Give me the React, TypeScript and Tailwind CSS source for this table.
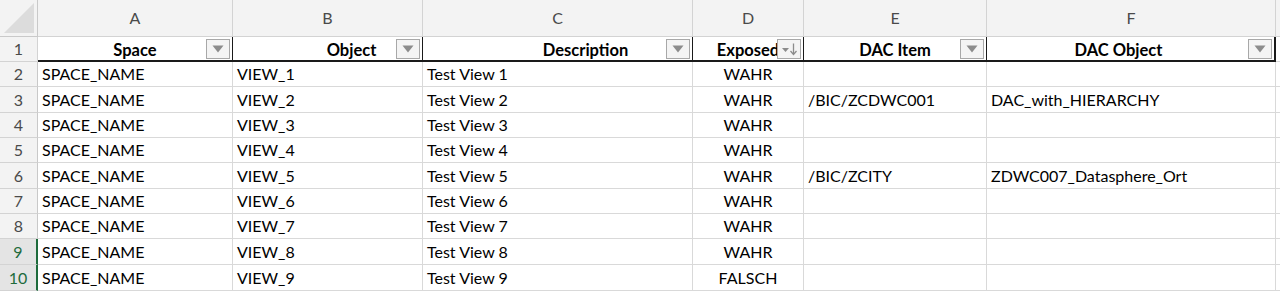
import React from "react";

const cols = ["A", "B", "C", "D", "E", "F"];

const headers: { label: string; cls: string; sort?: boolean }[] = [
  { label: "Space", cls: "justify-center" },
  { label: "Object", cls: "justify-center pl-[48px]" },
  { label: "Description", cls: "justify-center pl-[56px]" },
  { label: "Exposed", cls: "justify-center", sort: true },
  { label: "DAC Item", cls: "justify-center" },
  { label: "DAC Object", cls: "justify-center pr-[24px]" },
];

const rows: string[][] = [
  ["SPACE_NAME", "VIEW_1", "Test View 1", "WAHR", "", ""],
  ["SPACE_NAME", "VIEW_2", "Test View 2", "WAHR", "/BIC/ZCDWC001", "DAC_with_HIERARCHY"],
  ["SPACE_NAME", "VIEW_3", "Test View 3", "WAHR", "", ""],
  ["SPACE_NAME", "VIEW_4", "Test View 4", "WAHR", "", ""],
  ["SPACE_NAME", "VIEW_5", "Test View 5", "WAHR", "/BIC/ZCITY", "ZDWC007_Datasphere_Ort"],
  ["SPACE_NAME", "VIEW_6", "Test View 6", "WAHR", "", ""],
  ["SPACE_NAME", "VIEW_7", "Test View 7", "WAHR", "", ""],
  ["SPACE_NAME", "VIEW_8", "Test View 8", "WAHR", "", ""],
  ["SPACE_NAME", "VIEW_9", "Test View 9", "FALSCH", "", ""],
];

function FilterButton({ sort }: { sort?: boolean }) {
  return (
    <div className="absolute right-[2px] bottom-[1px] w-[24px] h-[20px] bg-[#f4f4f4] border border-[#a8a8a8] flex items-center justify-center">
      {sort ? (
        <svg width="20" height="14" viewBox="0 0 20 14">
          <path d="M3 6 L10 6 L6.5 10 Z" fill="#8c8c8c" />
          <path d="M14.5 1.5 V12" stroke="#8c8c8c" strokeWidth="1.3" />
          <path d="M11.5 9 L14.5 12.5 L17.5 9" stroke="#8c8c8c" strokeWidth="1.3" fill="none" />
        </svg>
      ) : (
        <svg width="12" height="8" viewBox="0 0 12 8">
          <path d="M0.5 0.5 L11.5 0.5 L6 7.5 Z" fill="#8c8c8c" />
        </svg>
      )}
    </div>
  );
}

export default function App() {
  const font = { fontFamily: "Lato, 'Open Sans', sans-serif" };
  return (
    <div className="w-[1280px] h-[291px] overflow-hidden bg-white" style={font}>
      <div className="grid grid-cols-[38px_195px_190px_270px_111px_183px_289px_1fr] grid-rows-[37px_25px_25px_26px_25px_25px_26px_25px_25px_26px_26px]">
        {/* corner */}
        <div className="relative bg-[#f3f3f3] border-r border-b border-[#c9c9c9] overflow-hidden">
          <svg className="absolute right-[3px] bottom-[3px]" width="30" height="30" viewBox="0 0 30 30">
            <path d="M30 0 L30 30 L0 30 Z" fill="#dcdcdc" />
          </svg>
        </div>
        {cols.map((c) => (
          <div
            key={c}
            className="bg-[#f3f3f3] border-r border-b border-[#d3d3d3] flex items-center justify-center text-[16px] text-[#4a4a4a]"
          >
            {c}
          </div>
        ))}
        <div className="bg-[#f3f3f3] border-b border-[#d3d3d3]" />

        {/* row 1 */}
        <div className="bg-[#f3f3f3] border-r border-b border-[#d3d3d3] flex items-center justify-center text-[16px] text-[#4a4a4a]">
          1
        </div>
        {headers.map((h, i) => (
          <div
            key={h.label}
            className={`relative flex items-center pt-[3px] border-r border-b-2 border-[#1a1a1a] font-bold text-[16.5px] text-black ${h.cls} ${
              i === 5 ? "border-r-2" : ""
            }`}
          >
            <span className="leading-none">{h.label}</span>
            <FilterButton sort={h.sort} />
          </div>
        ))}
        <div className="border-b border-[#d9d9d9]" />

        {rows.map((r, ri) => {
          const n = ri + 2;
          const sel = n >= 9;
          return (
            <React.Fragment key={n}>
              <div
                className={`flex items-center justify-center text-[16px] border-b border-[#d3d3d3] ${
                  sel
                    ? "bg-[#e4e4e4] text-[#1e6b3c] border-r-2 border-r-[#1e6b3c]"
                    : "bg-[#f3f3f3] text-[#4a4a4a] border-r border-r-[#c9c9c9]"
                }`}
              >
                {n}
              </div>
              {r.map((v, ci) => (
                <div
                  key={ci}
                  className={`flex items-center border-r border-b border-[#d9d9d9] text-[16px] text-black whitespace-nowrap overflow-hidden ${
                    ci === 3 ? "justify-center" : "pl-[4px]"
                  }`}
                >
                  {v}
                </div>
              ))}
              <div className="border-b border-[#d9d9d9]" />
            </React.Fragment>
          );
        })}
      </div>
    </div>
  );
}
